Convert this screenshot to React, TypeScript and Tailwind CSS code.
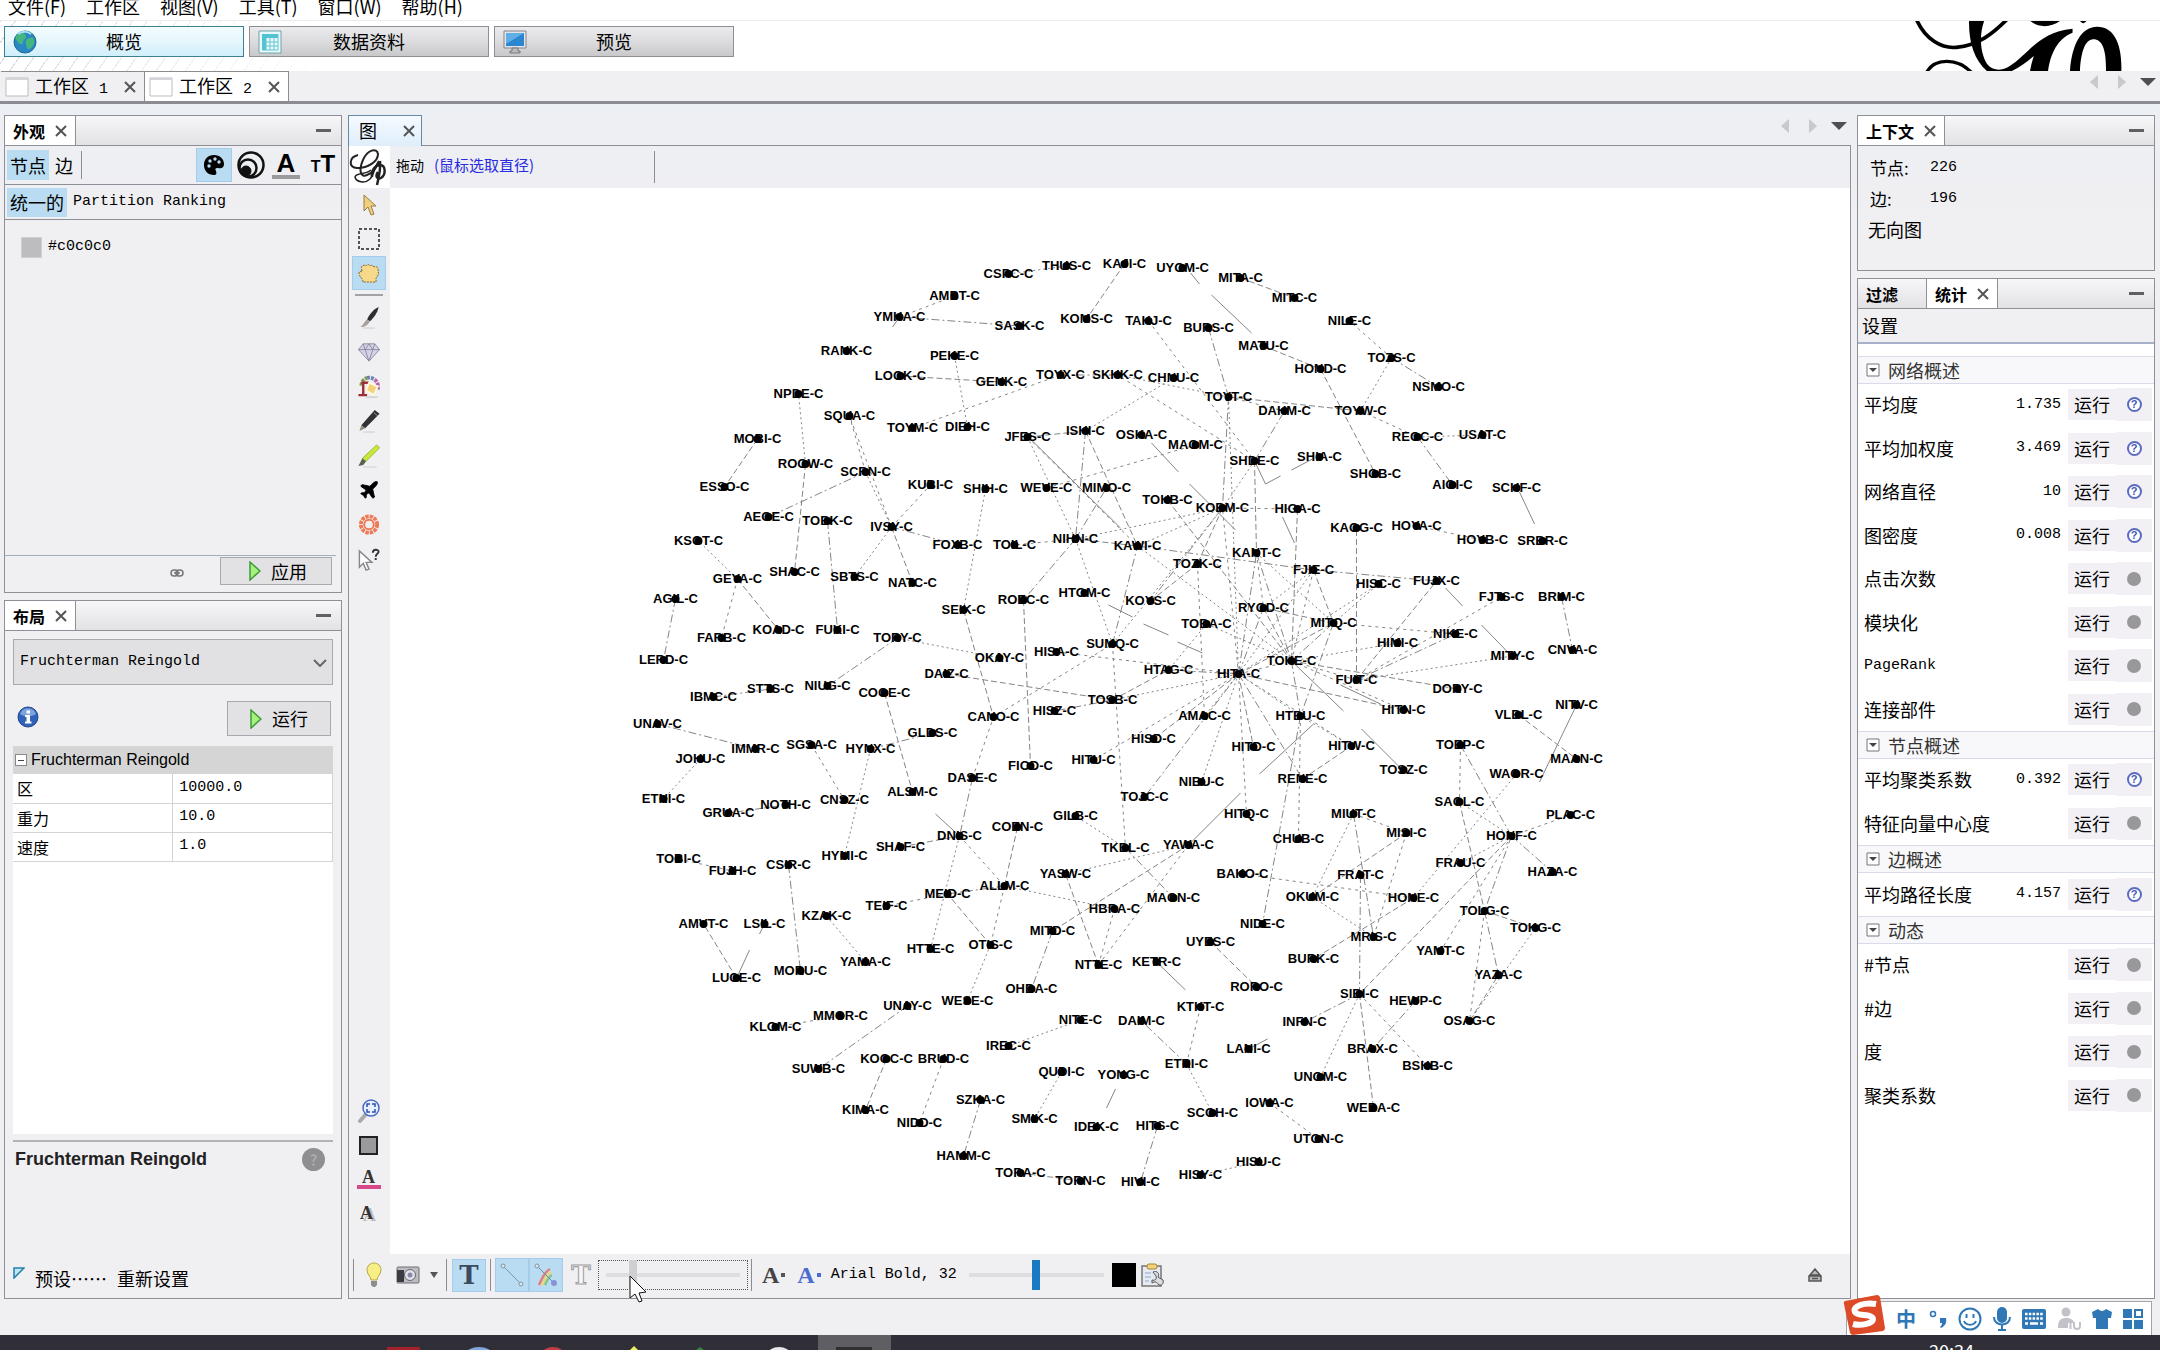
import type { ReactNode } from "react";
import { clsx } from "clsx";
import { Plane } from "lucide-react";

type NodeTuple = [string, number, number];

// label, x, y in graph space
const nodes: NodeTuple[] = [
  ["CSPC", 1008, 274], ["THUS", 1066, 266], ["KAJI", 1124, 264], ["UYOM", 1182, 268], ["MITA", 1240, 278],
  ["MITC", 1294, 298], ["AMBT", 954, 296], ["YMHA", 899, 317], ["SASK", 1019, 326], ["KOMS", 1086, 319],
  ["TAKJ", 1148, 321], ["BURS", 1208, 328], ["MATU", 1263, 346], ["NILE", 1349, 321], ["TOZS", 1391, 358],
  ["HOND", 1320, 369], ["NSMO", 1438, 387], ["RANK", 846, 351], ["PEKE", 954, 356], ["LOOK", 900, 376],
  ["GENK", 1001, 382], ["TOYX", 1060, 375], ["SKHK", 1117, 375], ["CHNU", 1173, 378], ["TOYT", 1228, 397],
  ["DAHM", 1284, 411], ["TOYW", 1360, 411], ["REOC", 1417, 437], ["USAT", 1482, 435], ["NPDE", 798, 394],
  ["SQUA", 849, 416], ["TOYM", 912, 428], ["DIEH", 967, 427], ["JFES", 1027, 437], ["ISHI", 1085, 431],
  ["OSKA", 1141, 435], ["MAOM", 1195, 445], ["SHDE", 1254, 461], ["SHIA", 1319, 457], ["SHOB", 1375, 474],
  ["AIOI", 1452, 485], ["SCHF", 1516, 488], ["MOBI", 757, 439], ["ROOW", 805, 464], ["SCRN", 865, 472],
  ["ESSO", 724, 487], ["KUBI", 930, 485], ["SHIH", 985, 489], ["WEVE", 1046, 488], ["MIMO", 1106, 488],
  ["TOHB", 1167, 500], ["KOBM", 1222, 508], ["HIGA", 1297, 509], ["KAOG", 1356, 528], ["HOYA", 1416, 526],
  ["HOYB", 1482, 540], ["SRBR", 1542, 541], ["AEGE", 768, 517], ["TOBK", 827, 521], ["IVSY", 891, 527],
  ["KSOT", 698, 541], ["FOXB", 957, 545], ["TOIL", 1014, 545], ["NIHN", 1075, 539], ["KAWI", 1137, 546],
  ["KANT", 1256, 553], ["TOZK", 1197, 564], ["FJIE", 1313, 570], ["HISC", 1378, 584], ["FUJX", 1436, 581],
  ["FJTS", 1501, 597], ["BRIM", 1561, 597], ["GEYA", 737, 579], ["SHAC", 794, 572], ["SBTS", 854, 577],
  ["NATC", 912, 583], ["AGIL", 675, 599], ["SEIK", 963, 610], ["ROEC", 1023, 600], ["HTGM", 1084, 593],
  ["KOYS", 1150, 601], ["RYOD", 1263, 608], ["TOBA", 1206, 624], ["MITQ", 1333, 623], ["NIKE", 1455, 634],
  ["HIMI", 1397, 643], ["MITY", 1512, 656], ["CNVA", 1572, 650], ["FARB", 721, 638], ["KOAD", 778, 630],
  ["FUKI", 837, 630], ["TORY", 897, 638], ["OKAY", 999, 658], ["HISA", 1056, 652], ["SUMQ", 1112, 644],
  ["LERD", 663, 660], ["DAIZ", 946, 674], ["IBMC", 713, 697], ["STTS", 770, 689], ["NIUG", 827, 686],
  ["COOE", 884, 693], ["TOSB", 1112, 700], ["HISZ", 1054, 711], ["CANO", 993, 717], ["TOKE", 1291, 661],
  ["HTAG", 1168, 670], ["HITA", 1238, 674], ["FUIT", 1356, 680], ["DORY", 1457, 689], ["HITN", 1403, 710],
  ["NITV", 1576, 705], ["VLBL", 1518, 715], ["AMAC", 1204, 716], ["HTBU", 1300, 716], ["UNAV", 657, 724],
  ["JOHU", 700, 759], ["IMMR", 755, 749], ["SGSA", 811, 745], ["HYNX", 870, 749], ["GLDS", 932, 733],
  ["DASE", 972, 778], ["FIOD", 1030, 766], ["HITU", 1093, 760], ["HISD", 1153, 739], ["HITD", 1253, 747],
  ["HITW", 1351, 746], ["TOEP", 1460, 745], ["MAAN", 1576, 759], ["WAOR", 1516, 774], ["TOSZ", 1403, 770],
  ["NIBU", 1201, 782], ["RENE", 1302, 779], ["TOJC", 1144, 797], ["SAOL", 1459, 802], ["PLAC", 1570, 815],
  ["HITQ", 1246, 814], ["MIUT", 1353, 814], ["MISI", 1406, 833], ["HONF", 1511, 836], ["CHUB", 1298, 839],
  ["TKBL", 1125, 848], ["YAWA", 1188, 845], ["FRAU", 1460, 863], ["HAZA", 1552, 872], ["BAKO", 1242, 874],
  ["FRAT", 1360, 875], ["ETNI", 663, 799], ["GRUA", 728, 813], ["NOTH", 785, 805], ["CNSZ", 844, 800],
  ["ALSM", 912, 792], ["DNIS", 959, 836], ["COEN", 1017, 827], ["GILB", 1075, 816], ["TOBI", 678, 859],
  ["FUJH", 732, 871], ["CSIR", 788, 865], ["HYMI", 844, 856], ["SHAF", 900, 847], ["YASW", 1065, 874],
  ["MEID", 947, 894], ["ALLM", 1004, 886], ["HBRA", 1114, 909], ["TEIF", 886, 906], ["AMVT", 703, 924],
  ["LSIL", 764, 924], ["KZAK", 826, 916], ["MITD", 1052, 931], ["HTTE", 930, 949], ["OTIS", 990, 945],
  ["YAMA", 865, 962], ["NTTE", 1098, 965], ["MORU", 800, 971], ["LUCE", 736, 978], ["OHBA", 1031, 989],
  ["UNAY", 907, 1006], ["WESE", 967, 1001], ["MMOR", 840, 1016], ["KLOM", 775, 1027], ["NITE", 1080, 1020],
  ["IREC", 1008, 1046], ["SUWB", 818, 1069], ["KOOC", 886, 1059], ["BRUD", 943, 1059], ["QUDI", 1061, 1072],
  ["SZKA", 980, 1100], ["KIMA", 865, 1110], ["NIDD", 919, 1123], ["SMIK", 1034, 1119], ["IDEK", 1096, 1127],
  ["HAMM", 963, 1156], ["TORA", 1020, 1173], ["TORN", 1080, 1181], ["MAON", 1173, 898], ["OKUM", 1312, 897],
  ["HONE", 1413, 898], ["TOLG", 1484, 911], ["TOKG", 1535, 928], ["NIDE", 1262, 924], ["MRIS", 1373, 937],
  ["UYES", 1210, 942], ["KETR", 1156, 962], ["BURK", 1313, 959], ["YAMT", 1440, 951], ["YAZA", 1498, 975],
  ["RORO", 1256, 987], ["SIBI", 1359, 994], ["HEWP", 1415, 1001], ["KTKT", 1200, 1007], ["OSAG", 1469, 1021],
  ["DAIM", 1141, 1021], ["INFN", 1304, 1022], ["LANI", 1248, 1049], ["BRAX", 1372, 1049], ["ETRI", 1186, 1064],
  ["BSHB", 1427, 1066], ["YONG", 1123, 1075], ["UNOM", 1320, 1077], ["IOWA", 1269, 1103], ["WEBA", 1373, 1108],
  ["SCOH", 1212, 1113], ["HITS", 1157, 1126], ["UTON", 1318, 1139], ["HISU", 1258, 1162], ["HISY", 1200, 1175],
  ["HIVI", 1140, 1182],
];

// source: targets
const links: Record<string, string> = {
  CSPC: "THUS", KAJI: "KOMS", YMHA: "AMBT SASK", PEKE: "DIEH", LOOK: "GENK", TOYX: "TOYM SKHK",
  ROOW: "NPDE SHAC", SCRN: "SQUA AEGE IVSY", MOBI: "ESSO", IVSY: "KUBI FOXB SBTS NATC SQUA", TOBK: "FUKI",
  GEYA: "KSOT KOAD FARB", AGIL: "LERD", SEIK: "SHIH CANO", DASE: "CANO DNIS", DNIS: "HTTE SHAF ALLM",
  TORY: "NIUG OKAY", DAIZ: "TOSB", CANO: "SUMQ", IBMC: "STTS", JFES: "NIHN ISHI KAWI", ISHI: "NIHN CHNU KAWI",
  WEVE: "MAOM", NIHN: "MIMO KOBM KAWI TOIL ROEC SUMQ", ROEC: "FIOD", HISA: "HITA", TOSB: "HISZ HITA HTAG",
  SUMQ: "TKBL KAWI KOBM", MITA: "MITC", TAKJ: "SHDE", TOYT: "BURS SKHK TOYW DAHM KOBM HITA", MATU: "HOND",
  TOZS: "NILE NSMO TOYW", HOND: "SHOB", SHDE: "SKHK DAHM KOBM KANT", TOYW: "REOC", REOC: "AIOI USAT",
  TOHB: "TOKE", KOBM: "HIGA KOYS KAWI TOZK", HITA:
    "KOBM KANT FJIE MITQ TOKE HTAG AMAC HISD HITU TOJC NIBU HITD HITQ RENE HTBU HITN HITW RYOD HISC",
  TOZK: "KOYS AMAC", KAWI: "FJIE TOKE", HIGA: "TOKE", KANT: "RYOD TOKE MITQ", FJIE: "MITQ TOKE FUJX RYOD",
  FUIT: "FUJX FJTS NIKE MITY KAOG TOKE", TOKE: "MITQ HIMI DORY HITN HTBU TOBA RYOD", MITQ: "NIKE HTBU HISC RYOD",
  HOYA: "HOYB", BRIM: "CNVA", TOBA: "HTAG", RENE: "HITW", HTBU: "CHUB NIDE HITW", VLBL: "MAAN",
  TOEP: "SAOL HONF", SAOL: "HONF TOLG", HONF: "PLAC HAZA FRAU SIBI YAMT TOLG", WAOR: "HONE",
  TOLG: "TOKG OSAG YAZA", OSAG: "TOKG YAZA", MIUT: "MISI MRIS OKUM", MISI: "OKUM MRIS", FRAT: "SIBI",
  OKUM: "MRIS", HONE: "BURK BAKO", SIBI: "INFN UNOM WEBA BSHB", HEWP: "BRAX", YAWA: "YASW MITD NTTE",
  TKBL: "MAON GILB", NTTE: "YASW HBRA", MITD: "OHBA", ALLM: "HBRA COEN OTIS MEID", OTIS: "WESE MEID",
  MEID: "TEIF", HYNX: "GLDS HYMI", COOE: "ALSM", SGSA: "CNSZ", UNAV: "IMMR", JOHU: "ETNI", GRUA: "NOTH",
  TOBI: "FUJH", CSIR: "MORU", KZAK: "YAMA", LUCE: "AMVT", KLOM: "MMOR", UNAY: "SUWB", IREC: "NITE",
  KOOC: "KIMA", BRUD: "NIDD", SZKA: "HAMM", QUDI: "SMIK", UYES: "RORO", ETRI: "KTKT DAIM SCOH",
  TORA: "TORN", IOWA: "UTON", HITS: "HIVI", HISY: "HISU",
};

// edges that are only partly drawn
const partial = [
  [1190, 273, 1199, 284], [1211, 295, 1251, 333], [1519, 492, 1534, 524], [1151, 443, 1178, 472],
  [1189, 484, 1235, 530], [1254, 461, 1265, 484], [1265, 484, 1280, 476], [1291, 470, 1312, 459],
  [1282, 517, 1294, 543], [1445, 588, 1462, 606], [1481, 625, 1510, 655], [1108, 605, 1132, 617],
  [1143, 624, 1168, 635], [1177, 642, 1202, 653], [1291, 661, 1343, 711], [1361, 729, 1400, 768],
  [1259, 774, 1313, 724], [1188, 845, 1240, 793], [935, 814, 959, 836], [1576, 705, 1539, 782],
  [764, 924, 759, 934], [749, 950, 738, 974], [1156, 962, 1185, 990], [1248, 1049, 1267, 1039],
  [1115, 1089, 1106, 1108], [899, 317, 892, 327], [1340, 685, 1380, 704], [1031, 440, 1120, 528],
];

const dashes = ["2 3", "6 3", "3 4", "8 3 2 3"];
const position = new Map(nodes.map(([id, x, y]) => [id, { x, y }]));
const edges = Object.entries(links).flatMap(([from, to]) =>
  to.split(" ").map((t) => ({ a: position.get(from)!, b: position.get(t)! }))
);

function Graph() {
  return (
    <svg viewBox="390 188 1459 1066" className="block h-full w-full" role="img" aria-label="图">
      <g stroke="#858585" strokeWidth="1">
        {edges.map(({ a, b }, i) => (
          <line key={i} x1={a.x} y1={a.y} x2={b.x} y2={b.y} strokeDasharray={dashes[i % 4]} />
        ))}
        {partial.map(([x1, y1, x2, y2], i) => (
          <line key={i} x1={x1} y1={y1} x2={x2} y2={y2} />
        ))}
      </g>
      {nodes.map(([id, x, y]) => (
        <g key={id}>
          <circle cx={x} cy={y} r="4" />
          <text
            x={x}
            y={y + 4}
            textAnchor="middle"
            className="font-['Liberation_Sans',sans-serif] text-[13px] font-bold"
          >
            {id}-C
          </text>
        </g>
      ))}
    </svg>
  );
}

const mono = "font-['Liberation_Mono','Noto_Sans_CJK_SC',monospace] text-[15px]";

function Cross() {
  return (
    <svg viewBox="0 0 12 12" className="size-3 shrink-0">
      <path d="M1 1 11 11M11 1 1 11" stroke="#555" strokeWidth="2" />
    </svg>
  );
}

function Tab({ label, active = true, closable = true }: { label: string; active?: boolean; closable?: boolean }) {
  return (
    <div className={clsx("flex items-center gap-2.5 border-r border-[#8f8f97] px-2", active ? "bg-white" : "pr-7")}>
      <span className="text-[16px] font-bold">{label}</span>
      {closable && (
        <button aria-label="关闭">
          <Cross />
        </button>
      )}
    </div>
  );
}

function Panel({ tabs, className, children }: { tabs: ReactNode; className?: string; children: ReactNode }) {
  return (
    <section className={clsx("flex flex-col border border-[#8f8f97]", className)}>
      <header className="flex h-[30px] shrink-0 border-b border-[#8f8f97] bg-linear-to-b from-[#f7f6f8] to-[#e2e1e4]">
        {tabs}
        <button aria-label="最小化" className="mr-1.5 ml-auto px-1">
          <span className="block h-[3px] w-[15px] bg-[#606064]" />
        </button>
      </header>
      {children}
    </section>
  );
}

function ScrollArrows({ className }: { className?: string }) {
  return (
    <svg viewBox="0 0 66 16" className={clsx("h-4 w-[66px]", className)}>
      <path d="M8 1v14L0 8zM28 1v14l8-7z" fill="#c9c8cc" />
      <path d="M50 4h16l-8 8z" fill="#4f4f53" />
    </svg>
  );
}

function PlayIcon() {
  return (
    <svg viewBox="0 0 12 20" className="h-5 w-3">
      <path d="M1 1 11 10 1 19z" fill="#a6f07c" stroke="#3f9a38" strokeWidth="1.5" />
    </svg>
  );
}

function Vr({ className }: { className?: string }) {
  return <span className={clsx("w-px shrink-0 bg-[#8c8c90]", className)} />;
}

function TopBar() {
  const views = [
    {
      label: "概览",
      active: true,
      icon: (
        <>
          <circle cx="12" cy="12" r="11" fill="#2b86c4" stroke="#1d6c8f" />
          <path d="M4 5c4-4 8-2 9 1s-3 3-3 6-3 3-5 0-4-3-1-7zM14 9c3-1 6-3 7 1s-2 8-5 9-2-4-3-5 0-4 1-5z" fill="#45b67f" />
          <path d="M5 4c4-3 10-3 13 0" stroke="#a9def0" strokeWidth="2" fill="none" />
        </>
      ),
    },
    {
      label: "数据资料",
      icon: (
        <>
          <path d="M1 1h22v22H1z" fill="#e9fafc" stroke="#6fa3ad" />
          <path d="M4 4h16v4H4zM4 8h4v12H4z" fill="#4fc3d3" />
          <path d="M8 8v12M12 4v16M16 4v16M4 12h16M4 16h16M4 20h16M20 4v16" stroke="#62c5d2" />
        </>
      ),
    },
    {
      label: "预览",
      icon: (
        <>
          <path d="M1 1h22v17H1z" fill="#e2e4ea" stroke="#84868f" />
          <path d="M3 3h18v13H3z" fill="#2b86cf" />
          <path d="M3 3h18L3 14z" fill="#60aee6" />
          <path d="M9 18h6v3h2v2H7v-2h2z" fill="#b9bbc2" stroke="#777" />
        </>
      ),
    },
  ];
  return (
    <div className="flex h-[51px] shrink-0 overflow-hidden border-t border-[#ececf0] bg-[linear-gradient(90deg,transparent,white_340px),repeating-linear-gradient(125deg,#d5dcde_0,#d5dcde_1px,white_1px,white_12px)] pl-1">
      <nav className="flex gap-[5px] pt-[5px]">
        {views.map((v) => (
          <button
            key={v.label}
            className={clsx(
              "flex h-[31px] w-60 items-center border px-2",
              v.active
                ? "border-[#3f7f92] bg-linear-to-b from-[#f3fcff] via-[#e6f7fd] to-[#cfeefb]"
                : "border-[#8f8f93] bg-linear-to-b from-[#ebebed] via-[#dcdcde] to-[#c9c9cc]"
            )}
          >
            <svg viewBox="0 0 24 24" className="size-6 shrink-0">{v.icon}</svg>
            <span className="flex-1 pr-6 text-center text-[18px]">{v.label}</span>
          </button>
        ))}
      </nav>
      <svg viewBox="580 62 740 151" className="ml-auto h-[51px] w-[247px]">
        <g fill="none" stroke="#000">
          <path d="M590 56c28 62 76 88 120 84 66-6 110-42 152-84" strokeWidth="11" />
          <path d="M620 216c24-44 92-46 136 0" strokeWidth="10" />
        </g>
        <path d="M748 58h46c-16 44-14 96 8 132 14 18 38 22 62 10C930 160 950 96 1058 84v12c-46 18-68 66-74 120h-54c2-16 6-32 12-50-32 26-62 50-98 54h-30c-48-30-68-92-66-162z" />
        <path d="M930 60c26 22 62 22 92 0zM1080 60c6 10 14 10 20 0z" />
        <path d="M1050 216c4-76 30-138 82-138 50 0 76 52 72 138h-46c2-62-8-100-38-100-26 0-38 44-40 100z" />
      </svg>
    </div>
  );
}

function WorkspaceTabs() {
  return (
    <div className="flex h-[33px] shrink-0 border-b-3 border-[#8b8b92] pl-px">
      {["1", "2"].map((n) => (
        <div
          key={n}
          className={clsx(
            "flex w-36 items-center border-t border-r border-[#8b8b92] px-1",
            n === "2" && "bg-white"
          )}
        >
          <svg viewBox="0 0 24 20" className="h-5 w-6">
            <path d="M1 1h22v18H1z" fill="#fff" stroke="#bdbcc2" />
            <path d="M1 1h22v2H1z" fill="#d5d4da" />
          </svg>
          <div className="ml-1.5 flex items-baseline gap-2.5">
            <span className="text-[18px]">工作区</span>
            <span className={mono}>{n}</span>
          </div>
          <button aria-label="关闭" className="mr-1 ml-auto">
            <Cross />
          </button>
        </div>
      ))}
      <ScrollArrows className="mt-[3px] mr-1 ml-auto" />
    </div>
  );
}

function Appearance() {
  return (
    <Panel className="h-[478px] shrink-0" tabs={<Tab label="外观" />}>
      <div className="flex h-[39px] shrink-0 items-center border-b border-[#8f8f97] pl-0.5">
        <button className="h-[30px] bg-[#b9dcf3] px-[3px] text-[18px]">节点</button>
        <button className="px-1.5 text-[18px]">边</button>
        <Vr className="ml-0.5 h-7" />
        <div className="ml-auto flex items-center gap-[3px]">
          <button aria-label="颜色" className="flex h-[34px] w-9 items-center justify-center border border-[#a3cdea] bg-[#b9dcf3]">
            <svg viewBox="0 0 22 22" className="size-[22px]">
              <path d="M11 1c6 0 10 4 10 9 0 4-3 5-6 4-3 0-3 1-2 3 1 3 0 4-2 4C5 21 1 17 1 11S5 1 11 1z" />
              <g fill="#b9dcf3">
                <circle cx="6" cy="12" r="1.7" />
                <circle cx="7" cy="7" r="1.7" />
                <circle cx="12" cy="5" r="1.7" />
                <circle cx="16" cy="8" r="1.7" />
              </g>
            </svg>
          </button>
          <button aria-label="大小" className="px-0.5">
            <svg viewBox="0 0 28 28" className="size-7" fill="none" stroke="#111">
              <circle cx="14" cy="14" r="12.5" strokeWidth="2.5" />
              <circle cx="11" cy="17" r="8.5" strokeWidth="2.5" />
              <circle cx="9" cy="20" r="5" fill="#111" />
            </svg>
          </button>
          <button aria-label="标签颜色" className="w-8 px-0.5">
            <span className="block border-b-4 border-[#9a9a9c] font-['Liberation_Sans',sans-serif] text-[26px] leading-6 font-bold">A</span>
          </button>
          <button aria-label="标签大小" className="flex w-9 items-baseline justify-center font-['Liberation_Sans',sans-serif] leading-6 font-bold">
            <span className="text-[16px]">T</span>
            <span className="text-[24px]">T</span>
          </button>
        </div>
      </div>
      <div className="flex h-[35px] shrink-0 items-center border-b border-[#8f8f97] px-0.5">
        <button className="h-[29px] bg-[#b9dcf3] px-[3px] text-[18px]">统一的</button>
        <button className={clsx(mono, "ml-1.5")}>Partition</button>
        <button className={clsx(mono, "ml-[9px]")}>Ranking</button>
      </div>
      <label className="flex items-center gap-1.5 px-4 pt-4">
        <button aria-label="#c0c0c0" className="size-[21px] border border-[#cfcfd2] bg-[#bdbdbf]" />
        <span className={mono}>#c0c0c0</span>
      </label>
      <div className="mr-[5px] mt-auto flex h-[37px] items-start justify-end border-t border-[#9fb0c2]">
        <svg viewBox="0 0 14 10" className="mt-3 mr-9 h-2.5 w-3.5" fill="none" stroke="#77777b" strokeWidth="1.5">
          <rect x="1" y="2" width="7" height="6" rx="3" />
          <rect x="6" y="2" width="7" height="6" rx="3" />
          <path d="M4 5h6" />
        </svg>
        <button className="mt-px mr-1 flex h-7 w-28 items-center justify-center gap-2.5 border border-[#a9a8b0] bg-[#e2e1e4] pl-1 text-[18px]">
          <PlayIcon />
          应用
        </button>
      </div>
    </Panel>
  );
}

function LayoutPanel() {
  const rows = [
    ["区", "10000.0"],
    ["重力", "10.0"],
    ["速度", "1.0"],
  ];
  return (
    <Panel className="min-h-0 flex-1" tabs={<Tab label="布局" />}>
      <div className="relative mx-2 mt-2">
        <select
          aria-label="布局"
          className={clsx(mono, "h-[46px] w-full appearance-none border border-[#aaa9b0] bg-[#e1e0e3] px-1.5")}
        >
          <option>Fruchterman Reingold</option>
        </select>
        <svg viewBox="0 0 14 8" className="pointer-events-none absolute top-5 right-1.5 h-2 w-3.5" fill="none">
          <path d="M1 1l6 6 6-6" stroke="#666" strokeWidth="2" />
        </svg>
      </div>
      <div className="mx-2.5 mt-4 flex h-[35px] items-center justify-between">
        <svg viewBox="0 0 22 22" className="mb-1 ml-0.5 size-[22px]">
          <circle cx="11" cy="11" r="10" fill="#2f62b8" stroke="#1f448c" />
          <path d="M3 8a8.500 8.500 0 0 1 16 0c-5 3-11 3-16 0z" fill="#7ea3df" />
          <path d="M9.500 4.500h3.500v3H9.500zM8 9h5v6.500h1.500v2H8v-2h1.500V11H8z" fill="#fff" />
        </svg>
        <button className="flex h-[35px] w-[104px] items-center justify-center gap-2.5 border border-[#a9a8b0] bg-[#e2e1e4] text-[18px]">
          <PlayIcon />
          运行
        </button>
      </div>
      <div className="mx-2 mt-2.5 min-h-0 flex-1 bg-white">
        <div className="flex h-7 items-center gap-1 bg-[#d5d5d5] pl-0.5 font-['Liberation_Sans',sans-serif] text-[16px]">
          <button aria-label="折叠" className="flex size-3 items-center justify-center border border-[#888] bg-white">
            <span className="h-px w-1.5 bg-[#444]" />
          </button>
          Fruchterman Reingold
        </div>
        <table className="w-full border-collapse">
          <tbody>
            {rows.map(([name, value]) => (
              <tr key={name} className="h-[29px] border-b border-[#d3d3d6]">
                <th scope="row" className="w-1/2 border-r border-[#d3d3d6] pl-1 text-left text-[16px] leading-6 font-normal">
                  {name}
                </th>
                <td className={clsx(mono, "border-r border-[#d3d3d6] pl-1.5")}>{value}</td>
              </tr>
            ))}
          </tbody>
        </table>
      </div>
      <div className="mx-2 mt-1.5 flex h-[158px] shrink-0 flex-col justify-between border-t-2 border-[#b3b2b7] pt-1">
        <div className="flex items-center justify-between px-0.5 pr-2">
          <span className="font-['Liberation_Sans',sans-serif] text-[18px] font-bold text-[#222]">Fruchterman Reingold</span>
          <button aria-label="帮助" className="size-[23px] rounded-full bg-[#8f8f91] text-[15px] leading-none font-bold text-[#aaa]">
            ?
          </button>
        </div>
        <div className="flex items-center pb-1.5 text-[18px]">
          <svg viewBox="0 0 12 12" className="mb-3 size-3">
            <path d="M1 1h10L1 11z" fill="#bfe6f7" stroke="#2581a8" strokeWidth="1.5" />
          </svg>
          <button className="ml-2.5">预设……</button>
          <button className="ml-2.5">重新设置</button>
        </div>
      </div>
    </Panel>
  );
}

const tools: { name: string; art: ReactNode }[] = [
  {
    name: "画笔",
    art: (
      <>
        <path d="M22 2c-5 2-10 8-12 13l3 2c4-4 8-9 9-15z" fill="#2c2e33" />
        <path d="M10 15l3 2c-2 4-5 6-10 6 3-2 4-6 7-8z" fill="#a9a197" />
        <path d="M6 24h12" stroke="#ccc" />
      </>
    ),
  },
  {
    name: "大小",
    art: (
      <g stroke="#8d8ba5" fill="#d4d3e6">
        <path d="M6 4h12l5 6-11 12L1 10z" />
        <path d="M1 10h22M6 4l2 6 4 12 4-12 2-6M8 10l4-6 4 6" fill="none" />
      </g>
    ),
  },
  {
    name: "油漆",
    art: (
      <>
        <g fill="none" strokeWidth="4" strokeDasharray="3 1">
          <path d="M4 11A9 9 0 0 1 10 3" stroke="#7c9b4f" />
          <path d="M10 3a9 9 0 0 1 8 2" stroke="#6f80b4" />
          <path d="M18 5a9 9 0 0 1 3 10" stroke="#b765a8" />
        </g>
        <path d="M4 8h8M6 9v11M1 21h9" stroke="#9e2f38" strokeWidth="2.500" />
        <path d="M12 8l9 4-4 9-8-5z" fill="#f3d37a" stroke="#fff8e0" strokeWidth="2" />
        <path d="M9 23h12" stroke="#bbb" />
      </>
    ),
  },
  {
    name: "铅笔",
    art: (
      <>
        <path d="M18 1l5 4L8 20l-4-3z" fill="#303236" />
        <path d="M4 17l4 3-6 3z" fill="#8c8f80" />
        <path d="M17 4l4 3" stroke="#999" />
        <path d="M6 24h12" stroke="#ccc" />
      </>
    ),
  },
  {
    name: "荧光笔",
    art: (
      <>
        <path d="M20 1l3 3L9 18l-4-3z" fill="#c6e83b" stroke="#9dbb31" />
        <path d="M5 15l4 3-3 4-5 1z" fill="#596052" />
        <path d="M6 24h14" stroke="#ccc" />
      </>
    ),
  },
  { name: "最短路径", art: null },
  {
    name: "热图",
    art: (
      <g fill="none" stroke="#ee7a55">
        <circle cx="12" cy="12" r="8.500" strokeWidth="4" strokeDasharray="3.500 1" />
        <circle cx="12" cy="12" r="5" strokeWidth="2" />
      </g>
    ),
  },
  {
    name: "帮助",
    art: (
      <>
        <path d="M2 3v17l4-4 3 7 3-1-3-7h6z" fill="#fff" stroke="#88888c" strokeWidth="1.500" />
        <path d="M16 5c0-4 6-4 6-1 0 2-3 2-3 5M19 10.500v2" stroke="#333" strokeWidth="2" fill="none" />
      </>
    ),
  },
];

function ToolButton({ name, active, children }: { name: string; active?: boolean; children: ReactNode }) {
  return (
    <button
      aria-label={name}
      className={clsx("flex h-[34px] w-[34px] items-center justify-center", active && "border border-[#a3cdea] bg-[#b9dcf3]")}
    >
      {children}
    </button>
  );
}

function ToolStrip() {
  return (
    <div className="flex w-[41px] shrink-0 flex-col items-center pr-0.5">
      <ToolButton name="选择">
        <svg viewBox="0 0 16 22" className="h-[22px] w-4">
          <path d="M3 1v16l4-4 3 8 3-1-3-8h5z" fill="#f0cf7f" stroke="#977c45" />
        </svg>
      </ToolButton>
      <ToolButton name="矩形选择">
        <svg viewBox="0 0 22 22" className="size-[22px]">
          <rect x="1" y="1" width="20" height="20" fill="none" stroke="#222" strokeWidth="1.500" strokeDasharray="3 2" />
        </svg>
      </ToolButton>
      <ToolButton name="拖动" active>
        <svg viewBox="0 0 22 20" className="h-5 w-[22px]">
          <path
            d="M5 19c0-4-4-5-4-9 0-2 2-2 3-1 0-2-1-5 0-6s3-1 4 0c1-2 3-2 4 0 1-1 3-1 4 1 2-1 4 0 4 2 1 5 0 7-2 9v4z"
            fill="#f6d98b"
            stroke="#8a6a2b"
            strokeDasharray="2 1"
          />
        </svg>
      </ToolButton>
      <span className="mt-1 mb-1 h-0.5 w-7 bg-[#a3a2a7]" />
      <div className="grid h-[277px] auto-rows-fr items-center">
        {tools.map((t) => (
          <ToolButton key={t.name} name={t.name}>
            {t.art ? (
              <svg viewBox="0 0 24 25" className="size-6">{t.art}</svg>
            ) : (
              <Plane className="size-[22px] fill-black" strokeWidth={1} />
            )}
          </ToolButton>
        ))}
      </div>
      <div className="mt-auto mb-6 flex flex-col items-center">
        <ToolButton name="居中">
          <svg viewBox="0 0 22 24" className="h-6 w-[22px]" fill="none">
            <path d="M9 14l-7 8" stroke="#aaa" strokeWidth="4" strokeLinecap="round" />
            <circle cx="13" cy="9" r="8" fill="#e7f0fd" stroke="#4c6bc0" strokeWidth="1.500" />
            <path d="M9 8V5h3M14 5h3v3M17 10v3h-3M12 13H9v-3" stroke="#2f4fae" strokeWidth="1.500" />
          </svg>
        </ToolButton>
        <ToolButton name="重置颜色">
          <span className="size-[19px] border-2 border-[#222] bg-[#9a9a9c]" />
        </ToolButton>
        <ToolButton name="标签颜色">
          <span className="w-6 border-b-4 border-[#d8478a] font-['Liberation_Serif',serif] text-[18px] leading-4 font-bold text-[#333]">A</span>
        </ToolButton>
        <ToolButton name="标签可见">
          <span className="pr-1 font-['Liberation_Serif',serif] text-[18px] font-bold text-[#333] text-shadow-[3px_2px_0px_#bbb]">A</span>
        </ToolButton>
      </div>
    </div>
  );
}

const track =
  "h-1 appearance-none bg-[#dedde0] [&::-webkit-slider-thumb]:h-[30px] [&::-webkit-slider-thumb]:w-2 [&::-webkit-slider-thumb]:appearance-none";

function GraphFooter() {
  return (
    <div className="flex h-[44px] shrink-0 items-center px-1 pb-0.5">
      <Vr className="h-8" />
      <button aria-label="背景颜色" className="ml-3">
        <svg viewBox="0 0 16 26" className="h-[26px] w-4">
          <path d="M8 1c4 0 7 3 7 7 0 5-4 6-4 10H5c0-4-4-5-4-10 0-4 3-7 7-7z" fill="#f7ee86" stroke="#b7a648" />
          <path d="M5 19h6v4l-2 2H7l-2-2z" fill="#8d8d90" />
        </svg>
      </button>
      <button aria-label="截图" className="ml-3.5">
        <svg viewBox="0 0 24 20" className="h-5 w-6">
          <rect x="1" y="2" width="22" height="16" rx="1" fill="#bcbcc2" stroke="#6e6e73" />
          <path d="M1 5h7v12H1z" fill="#3c3c40" />
          <circle cx="14" cy="10" r="5.500" fill="#e2e2ea" stroke="#66666c" />
          <circle cx="14" cy="10" r="2.500" fill="#8889a8" />
        </svg>
      </button>
      <svg viewBox="0 0 8 6" className="ml-2.5 h-1.5 w-2">
        <path d="M0 0h8L4 6z" fill="#555" />
      </svg>
      <Vr className="ml-2 h-8" />
      <button
        aria-label="显示节点标签"
        className="ml-[5px] h-[33px] w-[34px] border border-[#a3cdea] bg-[#b9dcf3] font-['DejaVu_Serif',serif] text-[26px] leading-none font-bold text-[#3b4a5c]"
      >
        T
      </button>
      <Vr className="mx-1 h-8" />
      <button aria-label="显示边" className="flex size-[34px] items-center justify-center border border-[#a3cdea] bg-[#b9dcf3]">
        <svg viewBox="0 0 24 24" className="size-6" fill="#d9e6ee" stroke="#7f97a8">
          <path d="M4 4l16 16" />
          <circle cx="3" cy="3" r="2" />
          <circle cx="21" cy="21" r="2" />
        </svg>
      </button>
      <button aria-label="边使用节点颜色" className="flex size-[34px] items-center justify-center border border-[#a3cdea] bg-[#b9dcf3]">
        <svg viewBox="0 0 24 24" className="size-6" fill="none">
          <path d="M5 22C8 16 10 9 16 6" stroke="#e07f7f" strokeWidth="2.500" />
          <path d="M8 22c3-5 4-10 9-13" stroke="#ecd878" strokeWidth="2.500" />
          <path d="M11 22c2-4 3-8 7-10" stroke="#7fc78b" strokeWidth="2.500" />
          <path d="M3 3l18 18" stroke="#6b88a8" />
          <circle cx="3" cy="3" r="2" fill="#d9e6ee" stroke="#7f97a8" />
          <circle cx="20" cy="20" r="3" fill="#8694d6" />
        </svg>
      </button>
      <button
        aria-label="显示边标签"
        className="ml-2 w-5 font-['DejaVu_Serif',serif] text-[26px] leading-none font-bold text-[#f6f6f8] [-webkit-text-stroke:1px_#9b9ba0]"
      >
        T
      </button>
      <div className="relative ml-[7px] flex h-[30px] w-[150px] items-center justify-center border border-dotted border-[#555]">
        <input
          type="range"
          aria-label="边粗细"
          defaultValue={18}
          className={clsx(track, "w-[134px] [&::-webkit-slider-thumb]:bg-[#cfcfd2]")}
        />
        <svg viewBox="0 0 18 28" className="absolute top-[14px] left-[30px] z-10 h-7 w-[18px]">
          <path d="M1 1v22l5-4 4 8 3-1-3-8 7-1z" fill="#fff" stroke="#111" />
        </svg>
      </div>
      <Vr className="ml-[3px] h-8" />
      <button aria-label="字体颜色模式" className="ml-2.5 flex items-center gap-0.5 font-['Liberation_Serif',serif] text-[24px] leading-none font-bold text-[#444]">
        A<span className="size-1 bg-[#555]" />
      </button>
      <button aria-label="字体大小模式" className="ml-3 flex items-center gap-0.5 font-['Liberation_Serif',serif] text-[24px] leading-none font-bold text-[#4c6bd0]">
        A<span className="size-1 bg-[#4c6bd0]" />
      </button>
      <button className={clsx(mono, "ml-2.5")}>Arial Bold, 32</button>
      <input
        type="range"
        aria-label="字体大小"
        defaultValue={50}
        className={clsx(track, "ml-3 w-[135px] [&::-webkit-slider-thumb]:bg-[#1979c3]")}
      />
      <button aria-label="颜色" className="ml-2 size-6 bg-black" />
      <button aria-label="属性" className="ml-[5px]">
        <svg viewBox="0 0 24 24" className="size-6">
          <path d="M1 3h19v20H1z" fill="#e4e9f2" stroke="#777" strokeWidth="1.500" />
          <rect x="6" y="1" width="10" height="5" rx="2" fill="#f3d27a" stroke="#a58437" />
          <path d="M4 10h6M4 14h6M4 18h4" stroke="#8ea6cf" />
          <path d="M12 9c4-2 7 2 5 5l5 3c1 3-1 6-4 5-2-3-4-4-7-2v-3c3 1 5-1 4-4z" fill="#dcdce0" stroke="#555" />
        </svg>
      </button>
      <button aria-label="展开" className="mr-6 ml-auto">
        <svg viewBox="0 0 14 14" className="size-3.5" fill="#bbb" stroke="#555" strokeWidth="1.500">
          <path d="M2 7l5-6 5 6zM1 8h12v5H1zM4 10.500h6" />
        </svg>
      </button>
    </div>
  );
}

function GraphPanel() {
  return (
    <section className="flex min-w-0 flex-1 flex-col">
      <header className="flex h-[30px] shrink-0 items-center">
        <div className="relative z-10 flex h-[31px] w-[74px] items-center justify-between border border-b-0 border-[#6788a5] bg-linear-to-b from-[#f5faff] to-[#dfeefb] px-2.5">
          <span className="text-[18px]">图</span>
          <button aria-label="关闭" className="-mr-1">
            <Cross />
          </button>
        </div>
        <ScrollArrows className="mr-1 mb-2 ml-auto" />
      </header>
      <div className="flex min-h-0 flex-1 flex-col border border-[#8f8f97]">
        <div className="flex h-[42px] shrink-0 items-center">
          <svg viewBox="0 0 41 42" className="h-[42px] w-[41px] bg-white" fill="none" stroke="#222">
            <path d="M9 9C0 11-1 22 8 22 20 22 29 15 29 8 28 1 18 4 14 14c-5 11-2 18 4 15 6-2 10-8 12-14" strokeWidth="2" />
            <path d="M30 15c-5 5-4 13-9 18-5 5-14 3-15-2 1-5 11-2 16-7" strokeWidth="1.500" />
            <path d="M23 31c-1-6 3-12 8-12 6 0 6 10 1 13-4 2-6-2-3-6M31 15c1 8-1 16-3 24" strokeWidth="2.500" />
          </svg>
          <span className="ml-1.5 pb-1 text-[14px]">拖动</span>
          <a href="#diameter" className="ml-2.5 pb-1 text-[15px] text-[#2a2ae0]">(鼠标选取直径)</a>
          <Vr className="ml-[120px] h-8" />
        </div>
        <div className="flex min-h-0 flex-1">
          <ToolStrip />
          <div className="min-w-0 flex-1 bg-white">
            <Graph />
          </div>
        </div>
        <GraphFooter />
      </div>
    </section>
  );
}

function ContextPanel() {
  return (
    <Panel className="h-[156px] shrink-0" tabs={<Tab label="上下文" />}>
      <dl className="grid grid-cols-[60px_1fr] items-center px-3 pt-1.5 text-[17px] leading-[31px]">
        <dt>节点:</dt>
        <dd className={mono}>226</dd>
        <dt>边:</dt>
        <dd className={mono}>196</dd>
      </dl>
      <p className="px-2.5 text-[18px] leading-[31px]">无向图</p>
    </Panel>
  );
}

type Stat = { name: string; value?: string };

const sections: { title: string; height: string; stats: Stat[] }[] = [
  {
    title: "网络概述",
    height: "h-[348px]",
    stats: [
      { name: "平均度", value: "1.735" },
      { name: "平均加权度", value: "3.469" },
      { name: "网络直径", value: "10" },
      { name: "图密度", value: "0.008" },
      { name: "点击次数" },
      { name: "模块化" },
      { name: "PageRank" },
      { name: "连接部件" },
    ],
  },
  {
    title: "节点概述",
    height: "h-[87px]",
    stats: [{ name: "平均聚类系数", value: "0.392" }, { name: "特征向量中心度" }],
  },
  { title: "边概述", height: "h-[44px]", stats: [{ name: "平均路径长度", value: "4.157" }] },
  {
    title: "动态",
    height: "h-[174px]",
    stats: [{ name: "#节点" }, { name: "#边" }, { name: "度" }, { name: "聚类系数" }],
  },
];

function StatRow({ name, value }: Stat) {
  return (
    <li className="flex items-center pr-0.5 pl-1.5">
      <span className={name === "PageRank" ? mono : "text-[18px]"}>{name}</span>
      <span className={clsx(mono, "ml-auto")}>{value}</span>
      <button className="ml-[7px] h-[31px] w-12 bg-[#f2f0f4] text-[18px]">运行</button>
      <button aria-label="报告" className="flex h-[33px] w-9 items-center justify-center bg-[#f2f0f4]">
        {value ? (
          <span className="flex size-[15px] items-center justify-center rounded-full border-2 border-[#5b6cc0] bg-white font-['Liberation_Sans',sans-serif] text-[11px] leading-none font-bold text-[#4558b8]">
            ?
          </span>
        ) : (
          <span className="size-3.5 rounded-full bg-[#98989a]" />
        )}
      </button>
    </li>
  );
}

function StatisticsPanel() {
  return (
    <Panel
      className="min-h-0 flex-1 bg-white"
      tabs={
        <>
          <Tab label="过滤" active={false} closable={false} />
          <Tab label="统计" />
        </>
      }
    >
      <div className="flex h-[35px] shrink-0 items-center border-b-2 border-[#a9b0cc] bg-[#f0eff2] pl-1">
        <button className="text-[18px]">设置</button>
      </div>
      <div className="pt-3">
        {sections.map((s) => (
          <section key={s.title}>
            <h3 className="flex h-7 items-center gap-2 border-y border-[#d9dbea] bg-[#f8f7fa] pl-2 text-[18px] text-[#333]">
              <svg viewBox="0 0 14 14" className="size-3.5">
                <path d="M1 1h12v12H1z" fill="#fff" stroke="#777" />
                <path d="M3 5h8l-4 4z" fill="#444" />
              </svg>
              {s.title}
            </h3>
            <ul className={clsx("-mt-px grid auto-rows-fr", s.height)}>
              {s.stats.map((stat) => (
                <StatRow key={stat.name} {...stat} />
              ))}
            </ul>
          </section>
        ))}
      </div>
    </Panel>
  );
}

function StatusBar() {
  return (
    <div className="flex h-9 shrink-0 justify-end pr-2">
      <div className="mt-0.5 flex items-center gap-[11px] border border-b-0 border-[#a5a4a9] bg-white pr-2 text-[#2f77b5]">
        <svg viewBox="0 0 42 42" className="relative -top-1 -ml-1 h-[42px] w-[42px]">
          <path d="M2 7 34 1q2 0 3 2l5 31q0 2-2 3L10 41q-2 0-3-2L1 10q-1-2 1-3z" fill="#dd4a28" />
          <path
            d="M33 10C22 8 9 12 12 18c3 5 17 1 18 7 0 5-13 7-20 5"
            fill="none"
            stroke="#fff"
            strokeWidth="6"
          />
        </svg>
        <span className="text-[20px] leading-none font-bold">中</span>
        <svg viewBox="0 0 18 18" className="ml-0.5 size-[18px]" fill="currentColor">
          <circle cx="4" cy="4" r="2.500" fill="none" stroke="currentColor" strokeWidth="1.500" />
          <path d="M11 8h6c1 5-1 8-5 10l-1-1c2-2 2-3 2-4h-2z" />
        </svg>
        <svg viewBox="0 0 24 24" className="size-6" fill="none" stroke="currentColor" strokeWidth="2">
          <circle cx="12" cy="12" r="10.500" />
          <path d="M8.500 7v4M15.500 7v4M6 14c2 5 10 5 12 0" />
        </svg>
        <svg viewBox="0 0 18 24" className="h-6 w-[18px]" fill="none" stroke="currentColor" strokeWidth="2">
          <rect x="5" y="1" width="8" height="14" rx="4" fill="currentColor" />
          <path d="M1 10c0 10 16 10 16 0M9 18v4M5 23h8" />
        </svg>
        <svg viewBox="0 0 24 20" className="h-5 w-6">
          <rect x="0" y="0" width="24" height="20" rx="2" fill="currentColor" />
          <path d="M3 5h18M3 9.500h18" stroke="#fff" strokeWidth="2.500" strokeDasharray="2.500 1.300" />
          <path d="M3 14.500h3M8 14.500h8M18 14.500h3" stroke="#fff" strokeWidth="2.500" />
        </svg>
        <svg viewBox="0 0 24 24" className="size-6" fill="#c3c2c8">
          <circle cx="9" cy="5" r="4.500" />
          <path d="M1 21c0-8 3-10 8-10s7 2 8 4h-6v6z" />
          <path d="M11 15h5M13.500 15v7M17 15v4q0 3 3 3t3-3v-4" stroke="#c3c2c8" strokeWidth="2" fill="none" />
        </svg>
        <svg viewBox="0 0 20 22" className="h-[22px] w-5" fill="currentColor">
          <path d="M6 1q4 4 8 0l6 3-1 6h-3v11H4V10H1L0 4z" />
        </svg>
        <svg viewBox="0 0 20 20" className="size-5" fill="currentColor">
          <path d="M0 0h9v9H0zM0 11h9v9H0zM11 11h9v9h-9z" />
          <path d="M12 1h7v7h-7z" fill="none" stroke="currentColor" strokeWidth="2" />
        </svg>
      </div>
    </div>
  );
}

function Taskbar() {
  return (
    <footer className="flex h-[15px] shrink-0 items-start overflow-hidden bg-[#302f37]">
      <svg viewBox="0 0 1000 15" className="h-[15px] w-[1000px] shrink-0">
        <path d="M387 12h33v3h-33z" fill="#a3202c" />
        <ellipse cx="479" cy="19" rx="13" ry="7" fill="#7fa7dd" />
        <ellipse cx="553" cy="19" rx="11" ry="7" fill="#c23b45" />
        <path d="M634 11l4 4h-8z" fill="#f2ef5c" />
        <path d="M700 12l4 3h-8z" fill="#39833f" />
        <ellipse cx="779" cy="19" rx="11" ry="7" fill="#e8e8ea" />
        <path d="M818 0h73v15h-73z" fill="#5f5e63" />
        <path d="M836 12h36v3h-36z" fill="#302f33" />
      </svg>
      <time className="mt-[5px] mr-[186px] ml-auto text-[18px] leading-5 text-white">20:34</time>
    </footer>
  );
}

export default function App() {
  const menu = ["文件(F)", "工作区", "视图(V)", "工具(T)", "窗口(W)", "帮助(H)"];
  return (
    <div className="flex h-screen flex-col overflow-hidden bg-[#f0eff2] font-['Noto_Sans_CJK_SC',sans-serif] leading-normal text-black">
      <nav className="flex h-5 shrink-0 items-end gap-5 bg-white pb-0.5 pl-2">
        {menu.map((m) => (
          <button key={m} className="text-[18px] leading-6">
            {m}
          </button>
        ))}
      </nav>
      <TopBar />
      <WorkspaceTabs />
      <main className="flex min-h-0 flex-1 gap-1.5 bg-linear-to-b from-[#eceff3] to-[#f0eff2] to-10% pt-[11px] pr-[5px] pl-1">
        <aside className="flex w-[338px] shrink-0 flex-col gap-[7px]">
          <Appearance />
          <LayoutPanel />
        </aside>
        <GraphPanel />
        <aside className="flex w-[298px] shrink-0 flex-col gap-[7px]">
          <ContextPanel />
          <StatisticsPanel />
        </aside>
      </main>
      <StatusBar />
      <Taskbar />
    </div>
  );
}
